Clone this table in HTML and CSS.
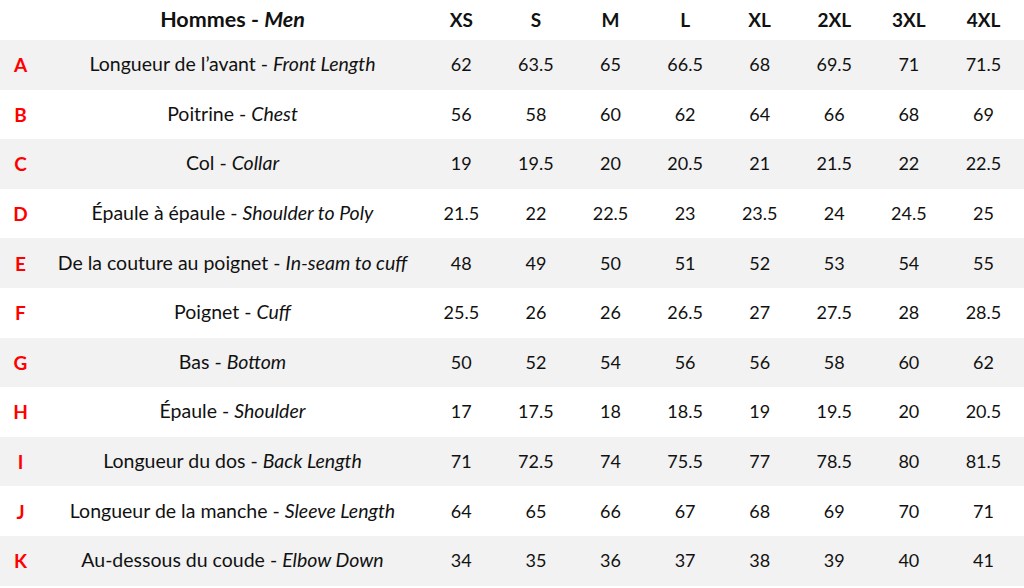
FILE: index.html
```html
<!DOCTYPE html>
<html lang="fr">
<head>
<meta charset="utf-8">
<title>Hommes - Men</title>
<link rel="stylesheet" href="styles.css">
</head>
<body>
<div class="chart">
  <div class="row head">
    <div class="key"></div>
    <div class="label">Hommes - <em>Men</em></div>
    <div class="v">XS</div><div class="v">S</div><div class="v">M</div><div class="v">L</div><div class="v">XL</div><div class="v">2XL</div><div class="v">3XL</div><div class="v">4XL</div>
  </div>
  <div class="row alt">
    <div class="key">A</div><div class="label">Longueur de l’avant - <em>Front Length</em></div>
    <div class="v">62</div><div class="v">63.5</div><div class="v">65</div><div class="v">66.5</div><div class="v">68</div><div class="v">69.5</div><div class="v">71</div><div class="v">71.5</div>
  </div>
  <div class="row">
    <div class="key">B</div><div class="label">Poitrine - <em>Chest</em></div>
    <div class="v">56</div><div class="v">58</div><div class="v">60</div><div class="v">62</div><div class="v">64</div><div class="v">66</div><div class="v">68</div><div class="v">69</div>
  </div>
  <div class="row alt">
    <div class="key">C</div><div class="label">Col - <em>Collar</em></div>
    <div class="v">19</div><div class="v">19.5</div><div class="v">20</div><div class="v">20.5</div><div class="v">21</div><div class="v">21.5</div><div class="v">22</div><div class="v">22.5</div>
  </div>
  <div class="row">
    <div class="key">D</div><div class="label">Épaule à épaule - <em>Shoulder to Poly</em></div>
    <div class="v">21.5</div><div class="v">22</div><div class="v">22.5</div><div class="v">23</div><div class="v">23.5</div><div class="v">24</div><div class="v">24.5</div><div class="v">25</div>
  </div>
  <div class="row alt">
    <div class="key">E</div><div class="label">De la couture au poignet - <em>In-seam to cuff</em></div>
    <div class="v">48</div><div class="v">49</div><div class="v">50</div><div class="v">51</div><div class="v">52</div><div class="v">53</div><div class="v">54</div><div class="v">55</div>
  </div>
  <div class="row">
    <div class="key">F</div><div class="label">Poignet - <em>Cuff</em></div>
    <div class="v">25.5</div><div class="v">26</div><div class="v">26</div><div class="v">26.5</div><div class="v">27</div><div class="v">27.5</div><div class="v">28</div><div class="v">28.5</div>
  </div>
  <div class="row alt">
    <div class="key">G</div><div class="label">Bas - <em>Bottom</em></div>
    <div class="v">50</div><div class="v">52</div><div class="v">54</div><div class="v">56</div><div class="v">56</div><div class="v">58</div><div class="v">60</div><div class="v">62</div>
  </div>
  <div class="row">
    <div class="key">H</div><div class="label">Épaule - <em>Shoulder</em></div>
    <div class="v">17</div><div class="v">17.5</div><div class="v">18</div><div class="v">18.5</div><div class="v">19</div><div class="v">19.5</div><div class="v">20</div><div class="v">20.5</div>
  </div>
  <div class="row alt">
    <div class="key">I</div><div class="label">Longueur du dos - <em>Back Length</em></div>
    <div class="v">71</div><div class="v">72.5</div><div class="v">74</div><div class="v">75.5</div><div class="v">77</div><div class="v">78.5</div><div class="v">80</div><div class="v">81.5</div>
  </div>
  <div class="row">
    <div class="key">J</div><div class="label">Longueur de la manche - <em>Sleeve Length</em></div>
    <div class="v">64</div><div class="v">65</div><div class="v">66</div><div class="v">67</div><div class="v">68</div><div class="v">69</div><div class="v">70</div><div class="v">71</div>
  </div>
  <div class="row alt">
    <div class="key">K</div><div class="label">Au-dessous du coude - <em>Elbow Down</em></div>
    <div class="v">34</div><div class="v">35</div><div class="v">36</div><div class="v">37</div><div class="v">38</div><div class="v">39</div><div class="v">40</div><div class="v">41</div>
  </div>
</div>
</body>
</html>
```

FILE: styles.css
```css
html, body {
  margin: 0;
  padding: 0;
  background: #ffffff;
}
body {
  font-family: Lato, "Liberation Sans", sans-serif;
  color: #111111;
  font-size: 18px;
}
.chart {
  width: 1024px;
}
.row {
  display: grid;
  grid-template-columns: 41px 383px repeat(8, 74.6px) 1fr;
  height: 49.6px;
  align-items: center;
}
.row.head {
  height: 40px;
  font-weight: 700;
  font-size: 19px;
}
.row.alt {
  background: #f2f2f2;
}
.key {
  text-align: center;
  color: #ff0000;
  font-weight: 700;
  font-size: 19px;
}
.label,
.v {
  text-align: center;
  white-space: nowrap;
}
.label {
  font-size: 19.5px;
  padding-bottom: 2px;
}
.v {
  padding-bottom: 1px;
}
.row.head .label {
  font-size: 21.5px;
}
em {
  font-style: italic;
}
```
